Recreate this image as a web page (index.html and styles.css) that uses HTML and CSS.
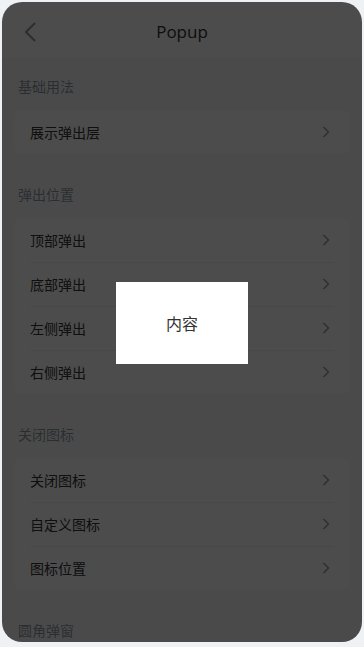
FILE: index.html
```html
<!DOCTYPE html>
<html lang="zh-CN">
<head>
<meta charset="utf-8">
<title>Popup</title>
<link rel="stylesheet" href="styles.css">
</head>
<body>
<div class="frame">
  <div class="nav">
    <svg class="back" width="12" height="20" viewBox="0 0 12 20"><path d="M10.5 1.5 2 10l8.5 8.5" fill="none" stroke="#969799" stroke-width="2" stroke-linecap="round" stroke-linejoin="round"/></svg>
    <div class="nav-title">Popup</div>
  </div>
  <div class="block first">
    <h2 class="block-title">基础用法</h2>
    <div class="card">
      <div class="cell"><span>展示弹出层</span><svg class="arrow" width="8" height="12" viewBox="0 0 8 12"><path d="M1.5 1 6.5 6l-5 5" fill="none" stroke="#969799" stroke-width="1.3"/></svg></div>
    </div>
  </div>
  <div class="block">
    <h2 class="block-title">弹出位置</h2>
    <div class="card">
      <div class="cell"><span>顶部弹出</span><svg class="arrow" width="8" height="12" viewBox="0 0 8 12"><path d="M1.5 1 6.5 6l-5 5" fill="none" stroke="#969799" stroke-width="1.3"/></svg></div>
      <div class="cell"><span>底部弹出</span><svg class="arrow" width="8" height="12" viewBox="0 0 8 12"><path d="M1.5 1 6.5 6l-5 5" fill="none" stroke="#969799" stroke-width="1.3"/></svg></div>
      <div class="cell"><span>左侧弹出</span><svg class="arrow" width="8" height="12" viewBox="0 0 8 12"><path d="M1.5 1 6.5 6l-5 5" fill="none" stroke="#969799" stroke-width="1.3"/></svg></div>
      <div class="cell"><span>右侧弹出</span><svg class="arrow" width="8" height="12" viewBox="0 0 8 12"><path d="M1.5 1 6.5 6l-5 5" fill="none" stroke="#969799" stroke-width="1.3"/></svg></div>
    </div>
  </div>
  <div class="block">
    <h2 class="block-title">关闭图标</h2>
    <div class="card">
      <div class="cell"><span>关闭图标</span><svg class="arrow" width="8" height="12" viewBox="0 0 8 12"><path d="M1.5 1 6.5 6l-5 5" fill="none" stroke="#969799" stroke-width="1.3"/></svg></div>
      <div class="cell"><span>自定义图标</span><svg class="arrow" width="8" height="12" viewBox="0 0 8 12"><path d="M1.5 1 6.5 6l-5 5" fill="none" stroke="#969799" stroke-width="1.3"/></svg></div>
      <div class="cell"><span>图标位置</span><svg class="arrow" width="8" height="12" viewBox="0 0 8 12"><path d="M1.5 1 6.5 6l-5 5" fill="none" stroke="#969799" stroke-width="1.3"/></svg></div>
    </div>
  </div>
  <div class="block">
    <h2 class="block-title">圆角弹窗</h2>
  </div>
  <div class="overlay"></div>
  <div class="popup">内容</div>
</div>
</body>
</html>
```
FILE: styles.css
```css
html, body {
  margin: 0;
  padding: 0;
}
body {
  background: #eff2f5;
  font-family: "Open Sans", "Noto Sans CJK SC", sans-serif;
  color: #323233;
}
.frame {
  position: relative;
  margin: 2px;
  width: 360px;
  height: 640px;
  border-radius: 20px;
  overflow: hidden;
  background: #f7f8fa;
}
.nav {
  position: relative;
  height: 56px;
  display: flex;
  align-items: center;
  justify-content: center;
  background: #fff;
}
.back {
  position: absolute;
  left: 22px;
  top: 20px;
}
.nav-title {
  font-size: 17px;
  font-weight: 500;
  color: #323233;
  margin-top: 2px;
}
.block-title {
  margin: 0;
  padding: 32px 16px 16px;
  font-size: 14px;
  line-height: 16px;
  font-weight: 400;
  color: rgba(69, 90, 100, 0.6);
  font-family: "Noto Sans CJK SC", sans-serif;
}
.first .block-title {
  padding-top: 20px;
}
.card {
  margin: 0 12px;
  background: #fff;
  border-radius: 8px;
  overflow: hidden;
}
.cell {
  position: relative;
  height: 44px;
  display: flex;
  align-items: center;
  justify-content: space-between;
  padding: 0 20px 0 16px;
  font-size: 14px;
  font-family: "Noto Sans CJK SC", sans-serif;
  color: #323233;
}
.cell + .cell::after {
  content: "";
  position: absolute;
  left: 16px;
  right: 16px;
  top: 0;
  border-top: 1px solid #ebedf0;
}
.overlay {
  position: absolute;
  inset: 0;
  background: rgba(0, 0, 0, 0.7);
}
.popup {
  position: absolute;
  left: 114px;
  top: 280px;
  width: 132px;
  height: 82px;
  background: #fff;
  display: flex;
  align-items: center;
  justify-content: center;
  font-size: 16px;
  font-family: "Noto Sans CJK SC", sans-serif;
  color: #323233;
}
```
